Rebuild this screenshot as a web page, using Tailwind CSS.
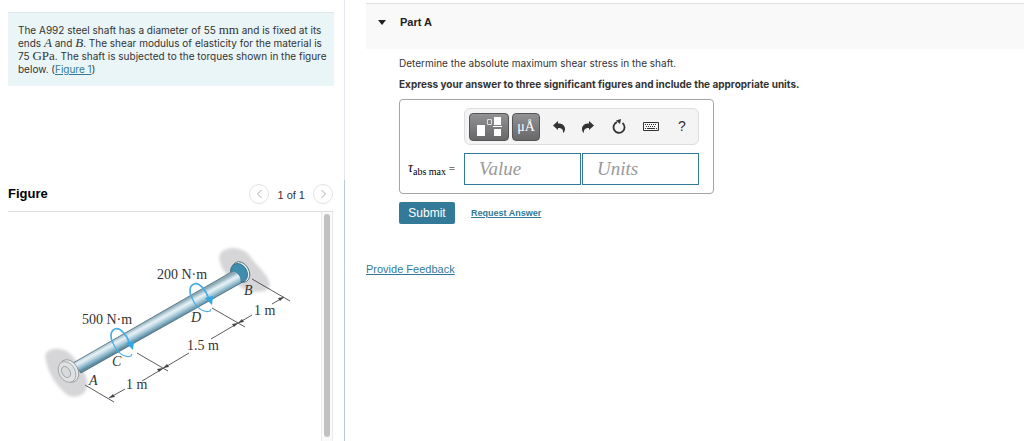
<!DOCTYPE html>
<html lang="en">
<head>
    <meta charset="UTF-8">
    <meta name="viewport" content="width=device-width, initial-scale=1.0">
    <title>Part A</title>
    <script src="https://cdn.jsdelivr.net/npm/@tailwindcss/browser@4"></script>
</head>
<body class="flex min-h-screen bg-white text-[10px] leading-[13px] text-[#333333] font-['Liberation_Sans',Arial,sans-serif]">
    <!-- Problem statement and figure -->
    <aside class="flex w-[345px] shrink-0 flex-col">
        <div class="h-[180px] border-r border-[#e4e7f0] pt-3 pr-[10px] pl-2">
            <p class="border-t border-[#dfe9ea] bg-[#eaf5f7] px-[10px] pt-[11px] pb-[10px] font-['Inter',sans-serif] whitespace-nowrap">
                The A992 steel shaft has a diameter of 55 <span class="font-['Liberation_Serif',serif] text-[13px] leading-[0px]">mm</span> and is fixed at its<br>
                ends <i class="font-['Liberation_Serif',serif] text-[13px] leading-[0px]">A</i> and <i class="font-['Liberation_Serif',serif] text-[13px] leading-[0px]">B</i>. The shear modulus of elasticity for the material is<br>
                75 <span class="font-['Liberation_Serif',serif] text-[13px] leading-[0px]">GPa</span>. The shaft is subjected to the torques shown in the figure<br>
                below. (<a href="#figure" class="text-[#337a99] underline">Figure 1</a>)
            </p>
        </div>
        <section id="figure" class="flex grow flex-col border-r border-[#b7cbdc] pr-[11px] pl-2">
            <header class="flex h-8 items-center justify-between border-b border-[#dddddd] pb-1">
                <h2 class="text-[13px] font-bold text-black">Figure</h2>
                <div class="flex items-center gap-2">
                    <button type="button" aria-label="Previous figure" class="flex size-5 items-center justify-center rounded-full border border-[#e2e2e2]">
                        <svg width="7" height="10" viewBox="0 0 7 10" fill="none" stroke="#aaaaaa"><path d="M5.5 1 1.5 5l4 4"/></svg>
                    </button>
                    <span class="pt-1 text-[11px]">1 of 1</span>
                    <button type="button" aria-label="Next figure" class="flex size-5 items-center justify-center rounded-full border border-[#e2e2e2]">
                        <svg width="7" height="10" viewBox="0 0 7 10" fill="none" stroke="#aaaaaa"><path d="m1.500 1 4 4-4 4"/></svg>
                    </button>
                </div>
            </header>
            <div class="flex grow">
                <svg class="block h-[229px] w-[313px]" viewBox="8 212 313 229" role="img" aria-label="Shaft AB with torques at C and D">
                    <defs>
                        <linearGradient id="steel" gradientUnits="userSpaceOnUse" x1="152" y1="318" x2="158" y2="329">
                            <stop offset="0" stop-color="#8fabb8"/>
                            <stop offset=".15" stop-color="#b5ced9"/>
                            <stop offset=".35" stop-color="#e9f2f6"/>
                            <stop offset=".55" stop-color="#c3dbe5"/>
                            <stop offset=".8" stop-color="#86b2c5"/>
                            <stop offset="1" stop-color="#5b8ba1"/>
                        </linearGradient>
                        <filter id="soft" x="-20%" y="-20%" width="140%" height="140%"><feGaussianBlur stdDeviation="1.500"/></filter>
                        <g id="torque">
                            <path d="M130 344C127 335 120 327 115 329C110 331 110 338 113 343" fill="none" stroke="#46aee5" stroke-width="1.700"/>
                            <path d="M113 343C116 351 124 359 131 356L132 354" fill="none" stroke="#46aee5" stroke-width="1.100"/>
                            <path d="m126 343 8-2-1 9z" fill="#32a5e3"/>
                        </g>
                    </defs>
                    <!-- Walls -->
                    <g filter="url(#soft)" fill="#d6d6d8">
                        <path d="M46 361C44 353 47 350 54 349C63 348 70 352 74 358C80 366 85 372 87 380C88 389 85 394 79 396C72 398 67 396 63 391C54 383 48 371 46 361Z"/>
                        <path d="M220 262C217 253 223 249 232 248C242 248 248 252 252 259C258 267 266 273 269 281C272 289 266 292 257 292C249 292 243 290 238 285C229 279 222 270 220 262Z"/>
                    </g>
                    <!-- Fixed support at B -->
                    <ellipse cx="241" cy="272" rx="8" ry="11" transform="rotate(-30 241 272)" fill="#e3edf1" stroke="#4f6873" stroke-width=".8"/>
                    <ellipse cx="239" cy="273" rx="8" ry="10" transform="rotate(-30 239 273)" fill="#3f8dae" stroke="#2b6079" stroke-width=".7"/>
                    <path d="M73 363 233 271c5 0 9 6 8 12L81 373z" fill="url(#steel)" stroke="#4b6977" stroke-width=".8"/>
                    <path d="M236 270c5 1 8 6 6 12-1-5-4-9-8-11z" fill="#3f8dae"/>
                    <!-- Fixed support at A -->
                    <ellipse cx="69" cy="371" rx="9" ry="12" transform="rotate(-30 69 371)" fill="#e6e8e9" stroke="#8d9295" stroke-width=".8"/>
                    <ellipse cx="67" cy="372" rx="8" ry="11" transform="rotate(-30 67 372)" fill="#dfe1e2" stroke="#a0a4a7" stroke-width=".8"/>
                    <ellipse cx="66" cy="372" rx="4" ry="6" transform="rotate(-30 66 372)" fill="#d8dadb" stroke="#999da0" stroke-width=".8"/>
                    <use href="#torque"/>
                    <use href="#torque" x="79" y="-45"/>
                    <!-- Dimension lines -->
                    <g fill="none" stroke="#4a4a4a" stroke-width=".9">
                        <path d="m85 385 29 17M137 353l31 18M212 308l33 19M252 279l38 22"/>
                        <path d="m109 398 16-9M142 381l47-28M211 339l41-24M272 304l12-7"/>
                    </g>
                    <path d="m109 398 6-1-2-3zM163 368l-6 1 2 3zM163 368l6-1-2-3zM238 323l-6 1 2 3zM238 323l6-1-2-3zM284 297l-6 1 2 3z" fill="#444444"/>
                    <g class="font-['Liberation_Serif',serif] text-[14px]" fill="#333333">
                        <text x="82" y="324">500 N·m</text>
                        <text x="157" y="279">200 N·m</text>
                        <text x="126" y="389">1 m</text>
                        <text x="187" y="350">1.5 m</text>
                        <text x="254" y="315">1 m</text>
                        <g font-style="italic">
                            <text x="89" y="385">A</text>
                            <text x="112" y="366">C</text>
                            <text x="191" y="322">D</text>
                            <text x="244" y="295">B</text>
                        </g>
                    </g>
                </svg>
                <div class="flex w-3 shrink-0 border-x border-[#ececec] bg-[#fafafa] px-[2px] pt-[2px] pb-1">
                    <div class="w-full rounded-full bg-[#c1c1c1]"></div>
                </div>
            </div>
        </section>
    </aside>

    <!-- Question part -->
    <main class="min-w-0 grow pt-[3px] pl-[21px]">
        <header class="flex h-[46px] items-start gap-[14px] border-t border-[#dddddd] bg-[#f9f9f9] pt-3 pl-3">
            <svg class="mt-1" width="8" height="5" viewBox="0 0 8 5"><path d="M0 0h8L4 5z" fill="#222222"/></svg>
            <h1 class="text-[11px] font-bold text-[#222222]">Part A</h1>
        </header>
        <form class="pt-2 pl-[33px]">
            <p class="font-['Inter',sans-serif]">Determine the absolute maximum shear stress in the shaft.</p>
            <p class="mt-2 font-['Inter',sans-serif] font-bold">Express your answer to three significant figures and include the appropriate units.</p>

            <div class="mt-2 flex h-[95px] w-[315px] items-end rounded border border-[#a5a5a5] pr-[14px] pb-2 pl-2">
                <label for="value" class="w-[56px] shrink-0 pb-[10px] text-[11px] whitespace-nowrap font-['Liberation_Serif',serif] text-black"><i class="text-[14px]">τ</i><sub class="text-[10px]">abs max</sub> =</label>
                <div class="grow">
                    <div class="mb-2 flex h-[37px] items-center rounded-md border border-[#dddddd] bg-[#f4f4f4] pl-1">
                        <button type="button" aria-label="Templates" class="flex h-7 w-10 items-center justify-center rounded border border-[#555555] bg-linear-to-b from-[#929295] to-[#68686b]">
                            <svg width="27" height="20" viewBox="0 0 27 20" fill="#ffffff"><path d="M1 8h8v11H1zM18 0h7v8h-7zM17 9h9v1h-9zM18 12h7v7h-7z"/><path d="M11.500 2.500h4v5h-4z" fill="none" stroke="#dddddd"/></svg>
                        </button>
                        <button type="button" aria-label="Units templates" class="ml-[3px] h-7 w-7 rounded border border-[#555555] bg-linear-to-b from-[#929295] to-[#68686b] font-['Liberation_Serif',serif] text-[14px] text-white">μÅ</button>
                        <div class="flex grow items-center justify-between pr-[10px] pl-[13px] text-[#333333]">
                            <button type="button" aria-label="Undo"><svg width="12" height="12" viewBox="0 0 12 12" fill="currentColor"><path d="M0 4.500 5 0v2.500c4.500 0 7 2 7 5.500 0 1.500-.5 3-2 4 .5-3.500-1-5-5-5V9z"/></svg></button>
                            <button type="button" aria-label="Redo"><svg width="12" height="12" viewBox="0 0 12 12" fill="currentColor"><path d="M12 4.500 7 0v2.500C2.500 2.500 0 4.500 0 8c0 1.500.5 3 2 4-.5-3.500 1-5 5-5V9z"/></svg></button>
                            <button type="button" aria-label="Reset"><svg width="14" height="15" viewBox="0 0 14 15"><path d="M10.500 4A5.500 5.500 0 1 1 5 3.200" fill="none" stroke="currentColor" stroke-width="1.800"/><path d="M4 1.500 9 0 8 5z" fill="currentColor"/></svg></button>
                            <button type="button" aria-label="Keyboard shortcuts"><svg width="16" height="11" viewBox="0 0 16 11" fill="none" stroke="currentColor"><path d="M.5 1.500h15v8H.5z"/><path d="M2 3.500h12M3 5.500h10" stroke-dasharray="1 1"/><path d="M2 7.500h1M4 7.500h8M13 7.500h1"/></svg></button>
                            <button type="button" aria-label="Help" class="w-3 text-[14px]">?</button>
                        </div>
                    </div>
                    <div class="flex gap-px">
                        <input id="value" type="text" placeholder="Value" class="h-8 w-0 grow border border-[#337a99] bg-white px-[14px] font-['Liberation_Serif',serif] text-[19px] placeholder:text-[#999999] placeholder:italic">
                        <input type="text" aria-label="Units" placeholder="Units" class="h-8 w-0 grow border border-[#337a99] bg-white px-[14px] font-['Liberation_Serif',serif] text-[19px] placeholder:text-[#999999] placeholder:italic">
                    </div>
                </div>
            </div>

            <div class="mt-2 flex items-center gap-4">
                <button type="submit" class="h-[22px] w-14 rounded-xs bg-[#337a99] text-[12px] text-white">Submit</button>
                <a href="#" class="text-[9px] font-bold text-[#337a99] underline">Request Answer</a>
            </div>
        </form>
        <a href="#" class="mt-[39px] inline-block text-[11px] text-[#337a99] underline">Provide Feedback</a>
    </main>
</body>
</html>
